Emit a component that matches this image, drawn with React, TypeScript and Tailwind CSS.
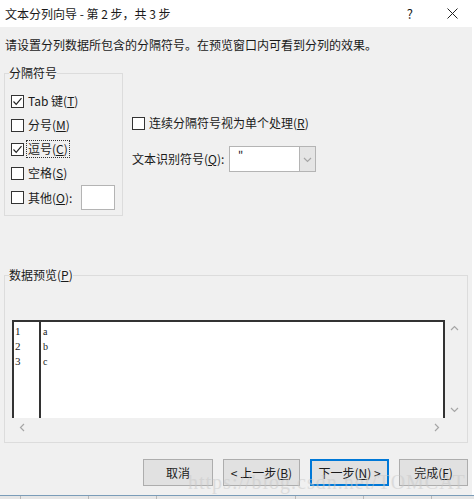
import { ReactNode } from 'react';

const cjk = { fontFamily: '"Microsoft YaHei", "Noto Sans CJK SC", "Liberation Sans", sans-serif' };

const CheckBox = ({ checked }: { checked?: boolean }) => (
  <span className="w-[13px] h-[13px] border border-[#333333] bg-white flex items-center justify-center shrink-0">
    {checked && (
      <svg width="11" height="11" viewBox="0 0 11 11">
        <path d="M1.5 5.5 L4.2 8.3 L9.5 2.2" stroke="#222" strokeWidth="1.2" fill="none" />
      </svg>
    )}
  </span>
);

const Option = ({ checked, focus, children }: { checked?: boolean; focus?: boolean; children: ReactNode }) => (
  <div className="h-[24px] flex items-center gap-[3px]">
    <CheckBox checked={checked} />
    <span className={`leading-[16px] px-[1px] ${focus ? 'outline outline-1 outline-dotted outline-[#333]' : ''}`}>{children}</span>
  </div>
);

const Btn = ({ children, w, primary }: { children: ReactNode; w: string; primary?: boolean }) => (
  <div
    className={`${w} h-[27px] flex items-center justify-center bg-[#e1e1e1] ${
      primary ? 'border-2 border-[#0078d7]' : 'border border-[#adadad]'
    }`}
  >
    {children}
  </div>
);

const Chevron = ({ d }: { d: string }) => (
  <svg width="9" height="9" viewBox="0 0 9 9">
    <path d={d} stroke="#a6a6a6" strokeWidth="1.2" fill="none" />
  </svg>
);

export default function App() {
  const rows = [
    ['1', 'a'],
    ['2', 'b'],
    ['3', 'c'],
  ];

  return (
    <div className="w-[474px] h-[499px] bg-white relative overflow-hidden text-[12px] text-[#1a1a1a]" style={cjk}>
      {/* title bar */}
      <div className="h-[27px] flex items-center pl-[5px] text-[12px]">
        <span>文本分列向导 - 第 2 步，共 3 步</span>
        <span className="ml-auto mr-[34px] text-[13px]">?</span>
        <svg width="11" height="11" viewBox="0 0 11 11" className="mr-[16px]">
          <path d="M0.5 0.5 L10.5 10.5 M10.5 0.5 L0.5 10.5" stroke="#222" strokeWidth="1" />
        </svg>
      </div>

      {/* body */}
      <div className="w-[472px] h-[468px] bg-[#f0f0f0] px-[4px] pt-[10px]">
        <div className="leading-[16px] pl-[1px]">请设置分列数据所包含的分隔符号。在预览窗口内可看到分列的效果。</div>

        <div className="flex mt-[12px]">
          <fieldset className="w-[119px] h-[151px] border border-[#dcdcdc] pl-[6px] pt-[8px]">
            <legend className="-ml-[2px] leading-[16px] px-0">分隔符号</legend>
            <Option checked>
              Tab 键(<u>T</u>)
            </Option>
            <Option>
              分号(<u>M</u>)
            </Option>
            <Option checked focus>
              逗号(<u>C</u>)
            </Option>
            <Option>
              空格(<u>S</u>)
            </Option>
            <div className="h-[25px] flex items-center">
              <Option>
                其他(<u>O</u>):
              </Option>
              <div className="ml-[8px] w-[34px] h-[25px] bg-white border border-[#b4b4b4]" />
            </div>
          </fieldset>

          <div className="ml-[9px] pt-[50px]">
            <div className="flex items-center gap-[4px] h-[16px]">
              <CheckBox />
              <span className="leading-[16px]">
                连续分隔符号视为单个处理(<u>R</u>)
              </span>
            </div>
            <div className="flex items-center mt-[15px]">
              <span className="leading-[16px] w-[97px]">
                文本识别符号(<u>Q</u>):
              </span>
              <div className="w-[87px] h-[26px] bg-white border border-[#b4b4b4] flex">
                <span className="flex-1 pl-[8px] leading-[14px] text-[11px]">"</span>
                <div className="w-[16px] h-full bg-[#e5e5e5] border-l border-[#b4b4b4] flex items-center justify-center">
                  <Chevron d="M1 3 L4.5 6.5 L8 3" />
                </div>
              </div>
            </div>
          </div>
        </div>

        <fieldset className="mt-[51px] w-[464px] h-[176px] border border-[#dcdcdc] pl-[7px] pt-[37px]">
          <legend className="-ml-[3px] leading-[16px] px-0">
            数据预览(<u>P</u>)
          </legend>
          <div className="flex">
            <div className="w-[433px]">
              <div className="h-[98px] bg-white border-t-2 border-x-2 border-[#333333] flex" style={{ fontFamily: '"Liberation Serif", serif' }}>
                <div className="w-[27px] border-r-2 border-[#333333] pt-[2px]">
                  {rows.map(r => (
                    <div key={r[0]} className="h-[15px] leading-[15px] text-[11px] pl-[1px]">
                      {r[0]}
                    </div>
                  ))}
                </div>
                <div className="flex-1 pt-[2px]">
                  {rows.map(r => (
                    <div key={r[1]} className="h-[15px] leading-[15px] text-[10px] pl-[2px]">
                      {r[1]}
                    </div>
                  ))}
                </div>
              </div>
              <div className="h-[18px] flex items-center justify-between pl-[6px] pr-[4px]">
                <Chevron d="M6 1 L2.5 4.5 L6 8" />
                <Chevron d="M3 1 L6.5 4.5 L3 8" />
              </div>
            </div>
            <div className="w-[18px] h-[98px] flex flex-col items-center justify-between py-[4px]">
              <Chevron d="M1 6 L4.5 2.5 L8 6" />
              <Chevron d="M1 3 L4.5 6.5 L8 3" />
            </div>
          </div>
        </fieldset>

        <div className="flex justify-end gap-[10px] mt-[16px]">
          <Btn w="w-[70px]">取消</Btn>
          <Btn w="w-[77px]">
            &lt; 上一步(<u>B</u>)
          </Btn>
          <Btn w="w-[79px]" primary>
            下一步(<u>N</u>) &gt;
          </Btn>
          <Btn w="w-[69px]">
            完成(<u>F</u>)
          </Btn>
        </div>
      </div>

      {/* spreadsheet behind */}
      <div className="border-t border-[#7a9cb8] h-[5px] bg-[#e6e6e6] flex">
        {[21, 68, 68, 139, 68, 68].map((w, i) => (
          <div key={i} className="h-full border-r border-[#b8b8b8]" style={{ width: w }} />
        ))}
      </div>

      {/* watermark */}
      <div
        className="absolute left-[188px] top-[467px] text-[20px] tracking-[1px] text-[#c8c8c8] opacity-50 pointer-events-none"
        style={{ fontFamily: '"Liberation Serif", serif' }}
      >
        https://blog.csdn.net/TOMCAT
      </div>
    </div>
  );
}
